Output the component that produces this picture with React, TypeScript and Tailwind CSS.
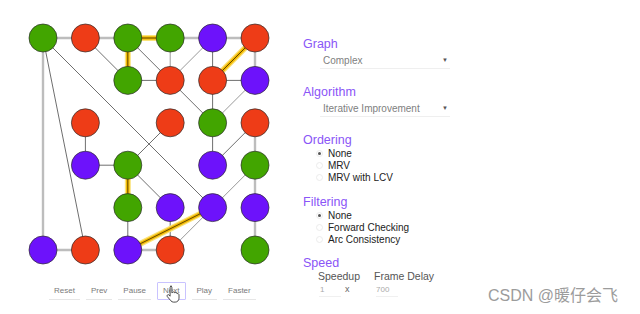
import React from "react";

const GREEN = "#42a500";
const RED = "#ee3c17";
const PURPLE = "#6d12fb";

const X = (c: number) => 43 + 42.4 * c;
const Y = (r: number) => 38 + 42.4 * r;

type Node = { c: number; r: number; fill: string };

const NODES: Node[] = [
  { c: 0, r: 0, fill: GREEN },
  { c: 1, r: 0, fill: RED },
  { c: 2, r: 0, fill: GREEN },
  { c: 3, r: 0, fill: GREEN },
  { c: 4, r: 0, fill: PURPLE },
  { c: 5, r: 0, fill: RED },
  { c: 2, r: 1, fill: GREEN },
  { c: 3, r: 1, fill: RED },
  { c: 4, r: 1, fill: RED },
  { c: 5, r: 1, fill: PURPLE },
  { c: 1, r: 2, fill: RED },
  { c: 3, r: 2, fill: RED },
  { c: 4, r: 2, fill: GREEN },
  { c: 5, r: 2, fill: RED },
  { c: 1, r: 3, fill: PURPLE },
  { c: 2, r: 3, fill: GREEN },
  { c: 4, r: 3, fill: PURPLE },
  { c: 5, r: 3, fill: GREEN },
  { c: 2, r: 4, fill: GREEN },
  { c: 3, r: 4, fill: PURPLE },
  { c: 4, r: 4, fill: PURPLE },
  { c: 5, r: 4, fill: PURPLE },
  { c: 0, r: 5, fill: PURPLE },
  { c: 1, r: 5, fill: RED },
  { c: 2, r: 5, fill: PURPLE },
  { c: 3, r: 5, fill: RED },
  { c: 5, r: 5, fill: GREEN },
];

// [c1, r1, c2, r2, kind]  kind: l = light thick, d = dark thin, g = grey thin, h = highlighted
type Edge = [number, number, number, number, "l" | "d" | "g" | "h"];

const EDGES: Edge[] = [
  [0, 0, 1, 0, "l"],
  [1, 0, 2, 0, "l"],
  [3, 0, 4, 0, "l"],
  [4, 0, 5, 0, "l"],
  [0, 0, 0, 5, "l"],
  [0, 0, 1, 5, "d"],
  [0, 0, 4, 4, "d"],
  [1, 0, 2, 1, "d"],
  [2, 0, 3, 1, "d"],
  [3, 0, 3, 1, "g"],
  [4, 0, 3, 1, "g"],
  [4, 0, 4, 1, "d"],
  [5, 0, 5, 1, "l"],
  [2, 1, 3, 1, "d"],
  [4, 1, 5, 1, "d"],
  [3, 1, 4, 2, "d"],
  [4, 1, 4, 2, "d"],
  [5, 1, 4, 2, "g"],
  [1, 2, 1, 3, "d"],
  [3, 2, 2, 3, "d"],
  [4, 2, 4, 3, "d"],
  [5, 2, 4, 3, "d"],
  [5, 2, 5, 3, "l"],
  [1, 3, 2, 3, "d"],
  [2, 3, 3, 4, "d"],
  [5, 3, 4, 4, "g"],
  [5, 3, 5, 4, "l"],
  [2, 4, 2, 5, "d"],
  [3, 4, 3, 5, "d"],
  [4, 4, 3, 5, "g"],
  [5, 4, 5, 5, "l"],
  [0, 5, 1, 5, "l"],
  [2, 5, 3, 5, "l"],
  [2, 0, 3, 0, "h"],
  [2, 0, 2, 1, "h"],
  [5, 0, 4, 1, "h"],
  [2, 3, 2, 4, "h"],
  [4, 4, 2, 5, "h"],
];

function Graph() {
  return (
    <svg width="300" height="278" viewBox="0 0 300 278" className="block">
      {EDGES.filter((e) => e[4] !== "h").map(([c1, r1, c2, r2, k], i) => (
        <line
          key={i}
          x1={X(c1)}
          y1={Y(r1)}
          x2={X(c2)}
          y2={Y(r2)}
          stroke={k === "l" ? "#bdbdbd" : k === "g" ? "#9a9a9a" : "#6f6f6f"}
          strokeWidth={k === "l" ? 2.4 : 1}
        />
      ))}
      {EDGES.filter((e) => e[4] === "h").map(([c1, r1, c2, r2], i) => (
        <g key={"h" + i}>
          <line x1={X(c1)} y1={Y(r1)} x2={X(c2)} y2={Y(r2)} stroke="#fbe37a" strokeWidth={6} />
          <line x1={X(c1)} y1={Y(r1)} x2={X(c2)} y2={Y(r2)} stroke="#f2b800" strokeWidth={3.5} />
          <line x1={X(c1)} y1={Y(r1)} x2={X(c2)} y2={Y(r2)} stroke="#3a2a00" strokeWidth={0.8} />
        </g>
      ))}
      {NODES.map((n, i) => (
        <circle key={i} cx={X(n.c)} cy={Y(n.r)} r={14} fill={n.fill} stroke="#2d2d2d" strokeWidth={0.7} />
      ))}
    </svg>
  );
}

function HandCursor() {
  return (
    <svg width="14" height="18" viewBox="0 0 14 18" className="absolute left-[166px] top-[285px]">
      <path
        d="M4.5 1.2c.8 0 1.4.6 1.4 1.4v5.2l.3-.1c.3-.6.9-.9 1.5-.8.6.1 1 .5 1.1 1 .4-.4 1-.5 1.5-.3.5.2.8.6.8 1.1.4-.2.9-.2 1.300.1.4.3.6.7.6 1.2v3.2c0 2.2-1.6 3.9-3.8 3.9H7.4c-1 0-1.9-.5-2.5-1.3L1.3 11.6c-.4-.6-.3-1.3.2-1.7.5-.4 1.2-.3 1.7.2l.9 1.1V2.6c0-.8.6-1.4 1.4-1.4z"
        fill="#ffffff"
        stroke="#222"
        strokeWidth="0.8"
      />
    </svg>
  );
}

const BUTTONS = ["Reset", "Prev", "Pause", "Next", "Play", "Faster"];

function Radio({ checked }: { checked?: boolean }) {
  return (
    <span className="flex h-[7px] w-[7px] items-center justify-center rounded-full border border-[#ececec] bg-white">
      {checked && <span className="h-[3px] w-[3px] rounded-full bg-[#555]" />}
    </span>
  );
}

function Heading({ children, className = "" }: { children: React.ReactNode; className?: string }) {
  return <div className={"h-[15px] text-[12.5px] leading-[15px] text-[#8a55f7] " + className}>{children}</div>;
}

function Select({ value }: { value: string }) {
  return (
    <div className="ml-[17px] flex h-[17px] w-[130px] items-center justify-between border-b border-[#efefef] pl-[3px] pr-[2px] pt-[1px] text-[10px] text-[#808080]">
      <span>{value}</span>
      <span className="text-[6px] text-[#555]">▼</span>
    </div>
  );
}

function Options({ items, selected }: { items: string[]; selected: number }) {
  return (
    <div className="mt-[-1px]">
      {items.map((t, i) => (
        <div key={t} className="ml-[13px] flex h-[12px] items-center gap-[5px] text-[10px] text-[#222]">
          <Radio checked={i === selected} />
          <span>{t}</span>
        </div>
      ))}
    </div>
  );
}

export default function App() {
  return (
    <div
      className="relative h-[314px] w-[640px] overflow-hidden bg-white"
      style={{ fontFamily: '"Liberation Sans", Arial, sans-serif' }}
    >
      <div className="flex">
        <div className="w-[303px]">
          <Graph />
          <div className="ml-[49px] mt-[4px] flex gap-[6px]">
            {BUTTONS.map((b) => (
              <div
                key={b}
                className={
                  "flex h-[18px] items-center px-[5px] text-[8px] text-[#7a7a7a] " +
                  (b === "Next"
                    ? "rounded-[1px] border border-[#c9c3ff]"
                    : "border-b border-[#e6e6e6]")
                }
              >
                {b}
              </div>
            ))}
          </div>
        </div>
        <div className="pt-[37px]">
          <Heading>Graph</Heading>
          <Select value="Complex" />
          <Heading className="mt-[16px]">Algorithm</Heading>
          <Select value="Iterative Improvement" />
          <Heading className="mt-[16px]">Ordering</Heading>
          <Options items={["None", "MRV", "MRV with LCV"]} selected={0} />
          <Heading className="mt-[12px]">Filtering</Heading>
          <Options items={["None", "Forward Checking", "Arc Consistency"]} selected={0} />
          <Heading className="mt-[11px]">Speed</Heading>
          <div className="ml-[15px] flex h-[12px] items-center text-[10.5px] text-[#555]">
            <span className="w-[56px]">Speedup</span>
            <span>Frame Delay</span>
          </div>
          <div className="ml-[16px] mt-[1px] flex h-[12px] items-center text-[8px] text-[#aaa]">
            <span className="w-[22px] border-b border-[#f0f0f0] pl-[1px]">1</span>
            <span className="ml-[4px] w-[31px] text-[9px] text-[#666]">x</span>
            <span className="w-[22px] border-b border-[#f0f0f0]">700</span>
          </div>
        </div>
      </div>
      <HandCursor />
      <div
        className="absolute left-[488px] top-[286px] text-[16px] leading-[20px] text-[#9c9c9c]"
        style={{ fontFamily: '"Liberation Sans", "Noto Sans CJK SC", sans-serif' }}
      >
        CSDN @暖仔会飞
      </div>
    </div>
  );
}
